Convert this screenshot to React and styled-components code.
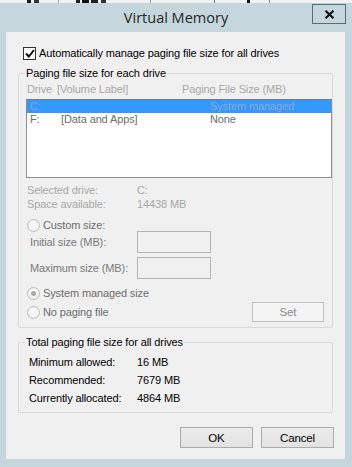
import React from 'react';
import styled, { createGlobalStyle } from 'styled-components';

const Global = createGlobalStyle`
  html, body { margin: 0; padding: 0; }
  body {
    background: #c5d7dd;
    font-family: "Liberation Sans", Arial, sans-serif;
    font-size: 11px;
    letter-spacing: -0.12px;
    color: #000;
  }
`;

const Window = styled.div`
  width: 352px;
  height: 467px;
  background: #c5d7dd;
  display: flex;
  flex-direction: column;
  overflow: hidden;
`;

const BackStrip = styled.div`
  height: 3px;
  flex: none;
  background:
    linear-gradient(90deg,
      #f2f2f2 0 27px, #1a1a1a 27px 31px, #f2f2f2 31px 34px, #333 34px 39px,
      #f2f2f2 39px 58px, #aaa 58px 59px, #f2f2f2 59px 76px, #222 76px 80px,
      #f2f2f2 80px 82px, #111 82px 89px, #f2f2f2 89px 91px, #222 91px 98px,
      #f2f2f2 98px 101px, #333 101px 106px, #f2f2f2 106px 150px, #999 150px 151px,
      #f2f2f2 151px 214px, #777 214px 215px, #f2f2f2 215px 247px, #111 247px 250px,
      #f2f2f2 250px 269px, #888 269px 270px, #f2f2f2 270px 352px);
`;

const TitleBar = styled.div`
  height: 29px;
  flex: none;
  display: grid;
  grid-template-columns: 1fr auto 1fr;
  align-items: start;
`;

const Title = styled.div`
  grid-column: 2;
  margin-top: 5px;
  font-family: "Open Sans", "Noto Sans", sans-serif;
  font-size: 14.5px;
  letter-spacing: 0;
  line-height: 20px;
  color: #262626;
`;

const CloseButton = styled.div`
  grid-column: 3;
  justify-self: end;
  margin-top: 1px;
  margin-right: 6px;
  width: 32px;
  height: 18px;
  border: 1px solid #5e6b70;
  display: flex;
  align-items: center;
  justify-content: center;
`;

const Client = styled.div`
  flex: 1;
  margin: 0 7px 8px 6px;
  background: #f0f0f0;
  padding: 15px 12px 0 12px;
  display: flex;
  flex-direction: column;
`;

const CheckRow = styled.label`
  display: flex;
  align-items: center;
  gap: 3px;
  height: 13px;
  margin-left: 5px;
  line-height: 13px;
`;

const CheckBox = styled.span`
  width: 11px;
  height: 11px;
  border: 1px solid #333;
  background: #fff;
  display: flex;
  align-items: center;
  justify-content: center;
  flex: none;
`;

const Group = styled.div`
  position: relative;
  border: 1px solid #dadada;
  border-radius: 2px;
  margin-top: ${p => p.$top}px;
  padding: ${p => p.$pad};
  display: flex;
  flex-direction: column;
`;

const Legend = styled.span`
  position: absolute;
  top: -7px;
  left: 6px;
  padding: 0 1px;
  background: #f0f0f0;
  line-height: 13px;
  color: #000;
`;

const HeaderRow = styled.div`
  display: grid;
  grid-template-columns: 30px 125px auto;
  margin: 9px 0 0 1px;
  line-height: 13px;
  color: #a8a8a8;
`;

const List = styled.div`
  margin-top: 3px;
  height: 77px;
  border: 1px solid #8e8f8f;
  border-top-color: #7a7a7a;
  background: #fff;
  display: flex;
  flex-direction: column;
`;

const ListRow = styled.div`
  display: grid;
  grid-template-columns: 31px 149px auto;
  height: 13px;
  line-height: 13px;
  padding-left: 3px;
  background: ${p => (p.$selected ? '#3399ff' : 'transparent')};
  color: ${p => (p.$selected ? '#88a9cc' : '#6d6d6d')};
`;

const InfoGrid = styled.div`
  display: grid;
  grid-template-columns: ${p => p.$label}px auto;
  margin: ${p => p.$margin};
  line-height: ${p => p.$line}px;
  color: ${p => p.$color};
`;

const RadioRow = styled.div`
  display: flex;
  align-items: center;
  gap: 3px;
  height: ${p => p.$h}px;
  margin: ${p => p.$top}px 0 0 1px;
  color: #6d6d6d;
  line-height: 13px;
`;

const Radio = styled.span`
  width: 11px;
  height: 11px;
  border: 1px solid #bdbdbd;
  border-radius: 50%;
  background: radial-gradient(circle at 50% 40%, #fbfbfb, #ececec);
  display: flex;
  align-items: center;
  justify-content: center;
  flex: none;
  &::after {
    content: '';
    display: ${p => (p.$checked ? 'block' : 'none')};
    width: 5px;
    height: 5px;
    border-radius: 50%;
    background: #a9a9a9;
  }
`;

const SizeRow = styled.div`
  display: grid;
  grid-template-columns: 107px 74px;
  align-items: center;
  margin: ${p => p.$top}px 0 0 4px;
  color: #7a7a7a;
`;

const SizeInput = styled.div`
  height: 20px;
  border: 1px solid #b4b4b4;
  background: #f0f0f0;
`;

const NoPagingRow = styled.div`
  display: flex;
  align-items: center;
  justify-content: space-between;
  height: 20px;
  margin: 2px 8px 0 1px;
`;

const RadioLabel = styled.span`
  display: flex;
  align-items: center;
  gap: 3px;
  color: #6d6d6d;
`;

const Button = styled.div`
  width: ${p => p.$w}px;
  height: ${p => p.$h}px;
  box-sizing: border-box;
  border: 1px solid ${p => (p.$disabled ? '#c2c2c2' : '#acacac')};
  background: ${p => (p.$disabled ? '#f4f4f4' : 'linear-gradient(#ececec, #e2e2e2)')};
  color: ${p => (p.$disabled ? '#8a8a8a' : '#000')};
  display: flex;
  align-items: center;
  justify-content: center;
  font-size: 11.5px;
`;

const ButtonRow = styled.div`
  display: flex;
  justify-content: flex-end;
  gap: 8px;
  margin: 14px -1px 0 0;
`;

export default function App() {
  return (
    <>
      <Global />
      <Window>
        <BackStrip />
        <TitleBar>
          <Title>Virtual Memory</Title>
          <CloseButton>
            <svg width="11" height="9" viewBox="0 0 11 9">
              <path d="M1.5 0.8 L9.5 8.2 M9.5 0.8 L1.5 8.2" stroke="#111" strokeWidth="2.2" />
            </svg>
          </CloseButton>
        </TitleBar>
        <Client>
          <CheckRow>
            <CheckBox>
              <svg width="10" height="9" viewBox="0 0 10 9">
                <path d="M1 4.5 L3.8 7.5 L9 1" fill="none" stroke="#111" strokeWidth="2" />
              </svg>
            </CheckBox>
            Automatically manage paging file size for all drives
          </CheckRow>

          <Group $top={13} $pad="0 0 5px 7px">
            <Legend>Paging file size for each drive</Legend>
            <HeaderRow>
              <span>Drive</span>
              <span>[Volume Label]</span>
              <span>Paging File Size (MB)</span>
            </HeaderRow>
            <List>
              <ListRow $selected>
                <span>C:</span>
                <span></span>
                <span>System managed</span>
              </ListRow>
              <ListRow>
                <span>F:</span>
                <span>[Data and Apps]</span>
                <span>None</span>
              </ListRow>
            </List>
            <InfoGrid $label={110} $margin="5px 0 0 1px" $line={14} $color="#a8a8a8">
              <span>Selected drive:</span>
              <span>C:</span>
              <span>Space available:</span>
              <span>14438 MB</span>
            </InfoGrid>
            <RadioRow $h={12} $top={8}>
              <Radio />
              Custom size:
            </RadioRow>
            <SizeRow $top={0}>
              <span>Initial size (MB):</span>
              <SizeInput />
            </SizeRow>
            <SizeRow $top={4}>
              <span>Maximum size (MB):</span>
              <SizeInput />
            </SizeRow>
            <RadioRow $h={14} $top={7}>
              <Radio $checked />
              System managed size
            </RadioRow>
            <NoPagingRow>
              <RadioLabel>
                <Radio />
                No paging file
              </RadioLabel>
              <Button $w={72} $h={20} $disabled>Set</Button>
            </NoPagingRow>
          </Group>

          <Group $top={14} $pad="10px 0 5px 10px">
            <Legend>Total paging file size for all drives</Legend>
            <InfoGrid $label={108} $margin="0" $line={18} $color="#000">
              <span>Minimum allowed:</span>
              <span>16 MB</span>
              <span>Recommended:</span>
              <span>7679 MB</span>
              <span>Currently allocated:</span>
              <span>4864 MB</span>
            </InfoGrid>
          </Group>

          <ButtonRow>
            <Button $w={73} $h={21}>OK</Button>
            <Button $w={73} $h={21}>Cancel</Button>
          </ButtonRow>
        </Client>
      </Window>
    </>
  );
}
